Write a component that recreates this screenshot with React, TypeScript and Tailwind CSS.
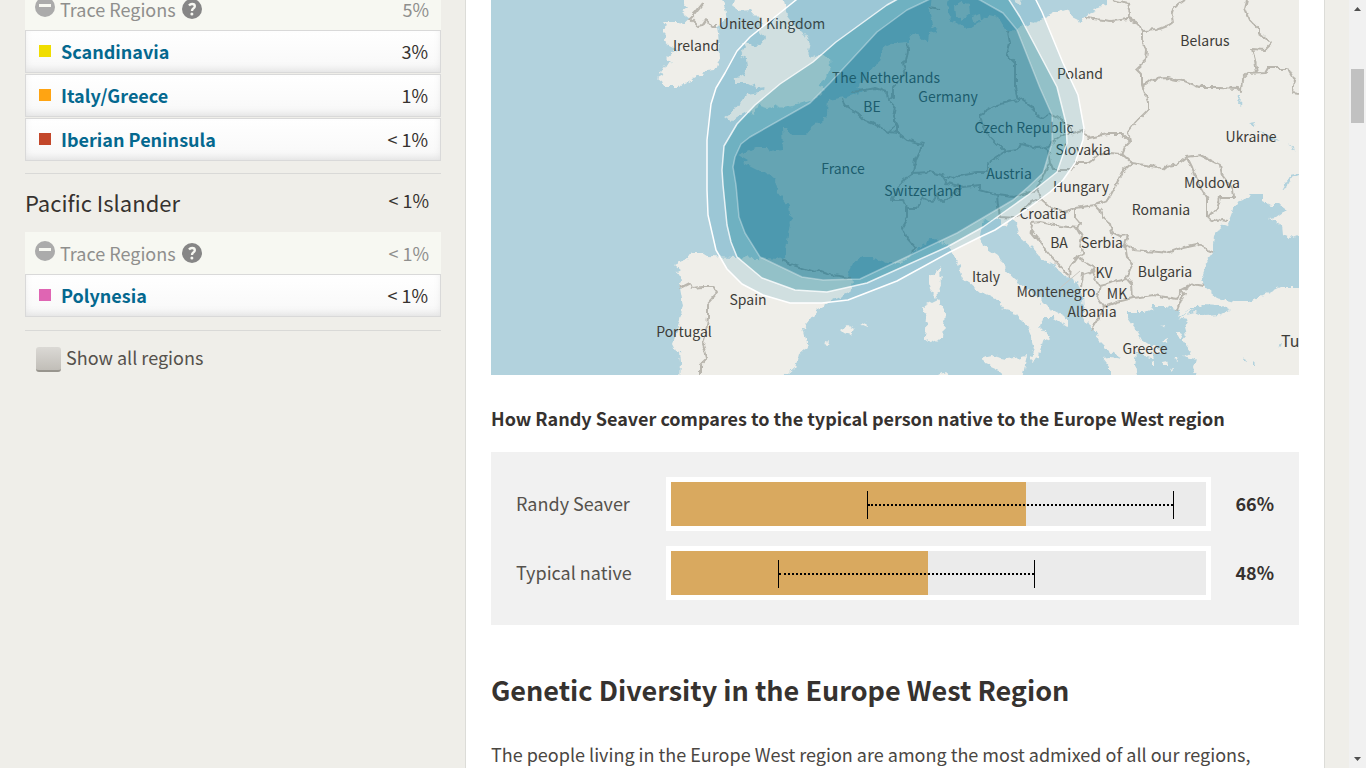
import React from "react";

interface Region {
  name: string;
  share: string;
  swatch: string;
}

interface Comparison {
  label: string;
  percent: string;
  fill: number;
  low: number;
  high: number;
}

interface MapLabel {
  name: string;
  x: number;
  y: number;
}

const europeTrace: Region[] = [
  { name: "Scandinavia", share: "3%", swatch: "bg-[#f0dd00]" },
  { name: "Italy/Greece", share: "1%", swatch: "bg-[#ffa412]" },
  { name: "Iberian Peninsula", share: "< 1%", swatch: "bg-[#c3472a]" },
];

const pacificTrace: Region[] = [
  { name: "Polynesia", share: "< 1%", swatch: "bg-[#df65b3]" },
];

const comparisons: Comparison[] = [
  { label: "Randy Seaver", percent: "66%", fill: 66.4, low: 36.6, high: 94 },
  { label: "Typical native", percent: "48%", fill: 48, low: 20, high: 68 },
];

const mapLabels: MapLabel[] = [
  { name: "United Kingdom", x: 772, y: 29 },
  { name: "Ireland", x: 696, y: 51 },
  { name: "Belarus", x: 1205, y: 46 },
  { name: "Poland", x: 1080, y: 79 },
  { name: "The Netherlands", x: 886, y: 83 },
  { name: "Germany", x: 948, y: 102 },
  { name: "BE", x: 872, y: 112 },
  { name: "Czech Republic", x: 1024, y: 133 },
  { name: "Ukraine", x: 1251, y: 142 },
  { name: "Slovakia", x: 1083, y: 155 },
  { name: "France", x: 843, y: 174 },
  { name: "Austria", x: 1009, y: 179 },
  { name: "Switzerland", x: 923, y: 196 },
  { name: "Hungary", x: 1081, y: 192 },
  { name: "Moldova", x: 1212, y: 188 },
  { name: "Croatia", x: 1043, y: 219 },
  { name: "Romania", x: 1161, y: 215 },
  { name: "BA", x: 1059, y: 248 },
  { name: "Serbia", x: 1102, y: 248 },
  { name: "KV", x: 1104, y: 278 },
  { name: "Bulgaria", x: 1165, y: 277 },
  { name: "Montenegro", x: 1056, y: 297 },
  { name: "MK", x: 1117, y: 299 },
  { name: "Albania", x: 1092, y: 317 },
  { name: "Italy", x: 986, y: 282 },
  { name: "Spain", x: 748, y: 305 },
  { name: "Portugal", x: 684, y: 337 },
  { name: "Greece", x: 1145, y: 354 },
];

const land = [
  // Ireland
  "685,-5 683,3 687,8 682,12 690,18 684,23 678,22 663,22 666,26 662,29 667,34 665,42 672,47 677,49 667,58 672,62 665,67 657,72 665,74 658,78 663,82 665,87 678,87 698,77 706,72 715,71 720,57 718,33 717,27 727,18 725,8 720,-5",
  // Great Britain
  "735,-5 732,6 738,10 750,9 755,15 763,23 757,32 765,37 762,43 758,46 743,43 745,47 740,55 747,58 748,68 745,75 732,79 735,83 747,83 757,88 767,87 760,93 747,95 742,100 733,112 725,118 732,121 737,117 747,112 753,115 757,105 767,108 775,105 783,108 797,105 813,100 822,95 823,87 817,85 825,80 831,67 830,60 822,54 812,57 807,53 809,43 805,35 800,30 793,23 787,15 783,-5",
  // Mainland
  "680,380 681,362 680,352 675,351 672,345 677,332 680,318 683,305 680,288 682,280 677,272 681,271 674,265 682,261 688,259 692,253 702,253 707,256 737,257 757,258 777,260 785,257 788,235 790,222 793,218 789,215 788,205 778,192 777,187 775,180 767,173 757,170 743,163 747,160 738,155 750,150 757,147 767,147 770,152 783,150 782,128 787,128 792,135 805,135 811,128 827,115 828,100 847,97 857,93 867,90 856,87 866,80 873,67 878,64 883,50 887,47 897,43 908,42 910,35 917,33 927,42 928,33 937,32 933,25 930,13 932,-5 950,-5 947,7 948,15 953,22 960,24 967,30 980,22 990,15 998,17 1003,25 1008,32 1027,25 1040,20 1055,12 1068,8 1072,17 1082,22 1085,16 1095,12 1092,8 1107,5 1107,-5 1305,-5 1305,380 1197,380 1193,367 1195,360 1183,357 1192,352 1183,340 1187,335 1185,327 1188,320 1178,318 1187,311 1202,307 1193,307 1177,317 1180,310 1167,306 1153,306 1152,309 1145,312 1128,312 1128,318 1135,328 1142,340 1150,345 1153,358 1145,355 1137,353 1135,365 1138,380 1110,380 1110,367 1103,358 1110,357 1122,359 1108,350 1098,340 1097,332 1090,327 1083,315 1082,295 1078,283 1068,277 1053,265 1040,257 1032,248 1020,237 1017,225 1013,218 1005,228 1000,222 998,218 983,222 980,235 983,245 998,255 1005,268 1013,278 1029,290 1040,300 1047,307 1068,318 1068,327 1053,318 1043,318 1040,327 1050,338 1040,345 1038,358 1030,361 1035,348 1032,338 1027,327 1017,313 1005,310 997,300 980,292 963,278 953,252 950,247 933,238 923,245 913,253 902,263 887,263 873,257 863,257 852,263 848,275 853,282 850,292 833,300 817,310 803,328 808,347 798,355 795,367 780,380",
  // Danish islands and Sweden
  "955,6 962,2 969,4 970,14 962,20 956,15",
  "972,16 980,14 981,20 974,21",
  "1015,-5 1021,-5 1020,4 1016,3",
  // Corsica, Sardinia
  "940,266 941,285 936,298 930,290 928,278 936,272",
  "938,300 945,312 943,338 932,343 925,338 927,318 922,308",
  // Balearics
  "840,330 848,325 855,329 850,336 844,334",
  "860,324 866,322 867,327 862,325",
  "824,344 829,340 828,345",
  // Sicily and the African coast
  "983,358 992,356 1007,359 1027,356 1025,365 1022,380 1010,380 1000,371 984,364",
  "935,377 945,372 952,378",
  // Aegean islands
  "1148,350 1155,345 1163,353 1158,354",
  "1176,332 1183,334 1181,339 1176,337",
  "1163,340 1168,338 1167,343",
  "1162,362 1167,361 1169,366 1163,366",
  "1174,358 1178,357 1179,361",
  "1160,326 1165,325 1164,329",
  "1170,368 1174,367 1173,371",
  "1150,362 1154,361 1154,366",
];

const water = [
  // Black Sea
  "1305,232 1290,238 1283,235 1282,225 1268,218 1277,217 1287,210 1280,205 1270,205 1262,201 1262,194 1250,194 1243,200 1238,202 1233,210 1228,223 1220,228 1215,237 1213,252 1207,260 1202,275 1205,288 1217,298 1235,302 1250,302 1263,295 1280,287 1305,287",
  // Sea of Marmara
  "1186,314 1200,306 1202,304 1220,305 1230,310 1220,315 1205,316 1195,312",
  // Rivers and lakes
  "1282,190 1287,181 1290,175 1299,173 1299,175 1291,178 1287,186",
  "1288,144 1297,152 1292,149",
  "1239,95 1241,95 1240,107 1238,105",
  "1279,347 1283,340 1282,348",
  "1244,356 1247,362 1244,361",
  "1253,362 1257,366 1253,366",
  "1260,131 1269,135 1279,141 1270,139",
  "1249,122 1255,121 1254,125",
];

const borders = [
  "703,3 695,13 690,18 698,26 702,25 706,19 712,27 717,27",
  "1112,0 1128,4 1131,12 1128,18 1138,23 1142,31 1157,30 1170,25 1173,23 1172,17 1175,7 1185,0",
  "1085,18 1112,21 1128,19",
  "1142,31 1142,40 1147,50 1146,60 1136,69 1142,75 1142,85 1148,102 1148,110 1135,123 1128,132 1130,142",
  "1142,85 1148,83 1153,79 1167,78 1187,82 1200,87 1220,87 1237,88 1241,92 1242,80 1248,74 1265,73 1268,68 1288,68 1295,80 1293,93 1299,94",
  "1247,0 1245,8 1250,20 1258,28 1258,33 1272,43 1265,50 1252,49 1255,60 1257,73",
  "980,115 997,105 1017,100 1020,98 1033,107 1037,115 1043,118 1050,113 1057,117 1070,127 1073,133 1083,130 1088,138 1108,134 1122,134 1130,142 1125,147 1122,154 1110,153 1098,155 1087,163 1075,163 1070,170 1053,170 1050,163",
  "980,115 983,127 990,137 1005,152 1017,150 1020,144 1037,148 1047,147 1063,135 1073,133",
  "1047,147 1050,163",
  "1008,32 1010,43 1007,55 1015,63 1015,87 1018,100",
  "907,43 908,50 906,62 902,63 905,75 893,87 893,97 888,100",
  "843,98 845,105 858,113 865,120 873,123 888,132 897,125 893,117 895,107 888,100 887,92 875,88 853,92",
  "888,132 898,133 907,140 923,144 915,160 913,173",
  "898,133 898,126 893,117",
  "913,173 903,180 892,200 903,200 907,208 918,208 922,197 932,203 937,195 943,202 952,195 963,187 947,183 942,175",
  "913,173 930,172 942,175 953,178 958,175 977,172 988,172 988,163 1000,155 1005,152",
  "963,187 980,185 980,190 997,195 1013,197 1037,190 1045,172 1050,163",
  "997,195 998,205 1000,217 1017,218 1027,205 1040,198 1037,190",
  "907,208 907,218 902,227 907,238 915,247 912,253",
  "782,260 793,265 815,272 818,270 832,275 850,278",
  "680,288 690,283 692,288 703,287 713,287 717,293 708,303 708,318 706,332 703,345 707,358 700,365 700,375",
  "929,7 940,9",
  "1122,154 1132,163 1157,167 1162,170 1167,166 1178,164 1187,157 1200,155 1210,160 1220,165 1222,175 1232,188 1233,198 1220,198 1217,208 1208,218",
  "1187,157 1192,167 1198,183 1207,198 1207,217 1217,222 1222,219 1228,220",
  "1132,163 1122,172 1115,187 1108,200 1095,205 1075,208 1063,212 1050,207 1040,198",
  "1095,205 1100,210 1103,218 1110,223 1112,232 1120,236 1128,235 1125,245 1133,250 1158,252 1167,253 1183,247 1197,244 1203,248 1213,252",
  "1125,245 1127,257 1133,263 1126,278 1132,285 1133,298 1153,295 1177,299 1182,290 1193,284 1204,286",
  "1182,290 1184,293 1177,310",
  "1126,279 1100,285 1097,298 1103,307 1117,302 1133,298",
  "1092,272 1083,275 1081,287",
  "1092,272 1098,283 1100,285",
  "1103,307 1100,317 1092,330",
  "1069,277 1070,267 1077,257 1095,268 1092,272",
  "1068,275 1053,258 1030,230 1032,223 1040,222 1060,226 1077,228 1082,237 1080,247 1083,253 1077,257",
  "1075,208 1075,218 1081,225 1077,228",
];

const GeneticRegionMap: React.FC = () => {
  return (
    <svg
      className="block w-full h-[375px] bg-[#b2d2dd]"
      viewBox="491 0 808 375"
      preserveAspectRatio="xMidYMid slice"
      role="img"
      aria-label="Map of the Europe West region"
    >
      <defs>
        <filter id="coast" x="491" y="0" width="808" height="375" filterUnits="userSpaceOnUse" colorInterpolationFilters="sRGB">
          <feTurbulence type="fractalNoise" baseFrequency="0.16" numOctaves="2" seed="4" />
          <feDisplacementMap in="SourceGraphic" scale="7" xChannelSelector="R" yChannelSelector="G" />
        </filter>
        <filter id="frontier" x="491" y="0" width="808" height="375" filterUnits="userSpaceOnUse" colorInterpolationFilters="sRGB">
          <feTurbulence type="fractalNoise" baseFrequency="0.14" numOctaves="2" seed="9" />
          <feDisplacementMap in="SourceGraphic" scale="6" xChannelSelector="R" yChannelSelector="G" />
        </filter>
      </defs>
      <g filter="url(#coast)">
        {land.map((points) => (
          <polygon key={points} points={points} fill="#efeee9" />
        ))}
        {water.map((points) => (
          <polygon key={points} points={points} fill="#b2d2dd" />
        ))}
      </g>
      <g filter="url(#frontier)" fill="none" stroke="#b9b6ae" strokeWidth="2" strokeLinejoin="round">
        {borders.map((points) => (
          <polyline key={points} points={points} />
        ))}
      </g>
      <path d="M1060 288L1080 271" stroke="#c9c7c1" />
      <g className="text-[14px]" fill="#3d3c38" textAnchor="middle">
        {mapLabels.map((label) => (
          <text key={label.name} x={label.x} y={label.y}>
            {label.name}
          </text>
        ))}
        <text x="1281" y="347" textAnchor="start" className="text-[16px]">
          Tu
        </text>
      </g>
      <g strokeWidth="1.5" strokeLinejoin="round">
        <polygon
          points="796,0 750,37 737,51 725,73 716,88 711,104 707,140 707,190 708,215 716,250 727,269 742,284 763,295 790,303 822,303 848,300 897,281 950,252 980,237 995,230 1030,207 1050,192 1063,180 1075,163 1083,140 1084,128 1078,95 1063,63 1042,12 1032,-8 806,-8"
          fill="rgb(33 138 173 / 0.15)"
          stroke="#fff"
        />
        <polygon
          points="896,0 887,5 836,42 813,62 780,84 755,105 737,124 724,146 722,170 723,185 727,225 731,242 737,257 762,278 795,290 827,292 867,283 947,247 983,227 1028,195 1047,180 1057,172 1067,143 1066,123 1057,87 1020,17 1004,-8 912,-8"
          fill="rgb(5 126 147 / 0.3)"
          stroke="rgb(255 255 255 / 0.8)"
        />
        <polygon
          points="928,0 907,10 877,32 830,83 810,103 750,137 741,144 735,157 733,167 736,185 739,217 745,233 760,257 802,277 823,280 860,279 957,233 1013,200 1028,187 1043,173 1052,143 1052,115 1040,88 1017,30 1003,13 980,0 960,-8 945,-8"
          fill="rgb(6 103 138 / 0.32)"
          stroke="rgb(255 255 255 / 0.35)"
        />
      </g>
    </svg>
  );
};

const TraceHeader: React.FC<{ share: string }> = ({ share }) => {
  return (
    <div className="flex h-[42px] items-center bg-[#f7f8f2] pl-2.5 pr-3 text-[#8f8f8d]">
      <button type="button" aria-label="Collapse trace regions" className="-mt-1 mr-[5px]">
        <svg className="block size-5" viewBox="0 0 20 20">
          <circle cx="10" cy="10" r="10" fill="#ababab" />
          <rect x="4" y="7" width="12" height="3" fill="#f7f8f2" />
        </svg>
      </button>
      <span>Trace Regions</span>
      <button type="button" aria-label="About trace regions" className="ml-1.5">
        <svg className="block size-5" viewBox="0 0 20 20">
          <circle cx="10" cy="10" r="10" fill="#868686" />
          <path
            d="M7 6.6Q8.300 5 10.100 5Q12.800 5 12.800 7.200Q12.800 8.600 11.300 9.500Q10 10.300 10 12"
            fill="none"
            stroke="#f7f8f2"
            strokeWidth="2.400"
          />
          <circle cx="9.900" cy="15" r="1.500" fill="#f7f8f2" />
        </svg>
      </button>
      <span className="ml-auto">{share}</span>
    </div>
  );
};

const RegionList: React.FC<{ regions: Region[] }> = ({ regions }) => {
  return (
    <ul className="flex flex-col gap-px">
      {regions.map((region) => (
        <li
          key={region.name}
          className="flex h-[43px] items-center border border-[#d9d9d9] bg-linear-to-b from-white to-[#f8f8f8] pb-0.5 pl-[13px] pr-3 shadow-[inset_0_-4px_8px_-2px_rgba(0,0,0,0.1)]"
        >
          <span className={`mr-2.5 size-3 ${region.swatch}`} />
          <a href="#" className="font-bold text-[#04688f]">
            {region.name}
          </a>
          <span className="ml-auto">{region.share}</span>
        </li>
      ))}
    </ul>
  );
};

const Sidebar: React.FC = () => {
  return (
    <aside className="-mt-3 w-[465px] shrink-0 pl-[25px] pr-6">
      <TraceHeader share="5%" />
      <RegionList regions={europeTrace} />
      <div className="mt-3 flex h-[59px] items-center justify-between border-t border-[#d9d9d7] pb-0.5 pr-3">
        <h2 className="text-[22px]">Pacific Islander</h2>
        <span className="-mt-1">&lt; 1%</span>
      </div>
      <TraceHeader share="< 1%" />
      <RegionList regions={pacificTrace} />
      <div className="mt-[13px] border-t border-[#d9d9d7] pl-[11px] pt-4">
        <label className="flex items-center gap-[5px] text-[#55514c]">
          <input
            type="checkbox"
            className="size-[25px] appearance-none rounded-[3px] border-b-2 border-[#98958e] bg-linear-to-b from-[#dbd9d5] to-[#c1beb8]"
          />
          <span className="-mt-1.5">Show all regions</span>
        </label>
      </div>
    </aside>
  );
};

const ComparisonRow: React.FC<{ item: Comparison }> = ({ item }) => {
  return (
    <div className="flex items-center">
      <span className="w-[150px] shrink-0 pb-0.5 text-[#55514c]">{item.label}</span>
      <div className="relative h-[54px] flex-1 border-[5px] border-white bg-[#ebebeb]">
        <div className="h-full bg-[#d9a95f]" style={{ width: `${item.fill}%` }} />
        <div
          className="absolute top-[9px] flex h-7 items-center border-x border-black"
          style={{ left: `${item.low}%`, right: `${100 - item.high}%` }}
        >
          <div className="w-full border-t-2 border-dotted border-black" />
        </div>
      </div>
      <span className="ml-6 w-[39px] pb-0.5 text-right font-bold">{item.percent}</span>
    </div>
  );
};

const Scrollbar: React.FC = () => {
  return (
    <div className="flex w-[17px] shrink-0 flex-col items-center bg-[#f1f1f1]">
      <svg className="h-[17px] w-[17px]" viewBox="0 0 17 17">
        <path d="M5 11L8.500 7L12 11Z" fill="#505050" />
      </svg>
      <div className="mt-[52px] h-[54px] w-[13px] bg-[#c1c1c1]" />
      <svg className="mt-auto h-[17px] w-[17px]" viewBox="0 0 17 17">
        <path d="M5 6L8.500 10L12 6Z" fill="#505050" />
      </svg>
    </div>
  );
};

const App: React.FC = () => {
  return (
    <div className="flex h-screen overflow-hidden bg-[#efeee9] font-['Noto_Sans_CJK_SC','Noto_Sans',sans-serif] text-[18px] leading-6 text-[#36322f]">
      <Sidebar />
      <main className="min-w-0 flex-1 border-x border-[#dcdcd8] bg-white px-[25px]">
        <GeneticRegionMap />
        <h3 className="mb-[21px] mt-[31px] leading-[25px] font-bold">
          How Randy Seaver compares to the typical person native to the Europe West region
        </h3>
        <div className="flex flex-col gap-[15px] bg-[#f1f1f1] p-[25px]">
          {comparisons.map((item) => (
            <ComparisonRow key={item.label} item={item} />
          ))}
        </div>
        <h2 className="mt-[47px] text-[27px] leading-9 font-bold">
          Genetic Diversity in the Europe West Region
        </h2>
        <p className="mt-[31px] leading-[30px] text-[#4a4642]">
          The people living in the Europe West region are among the most admixed of all our regions,
        </p>
      </main>
      <div className="w-6 shrink-0" />
      <Scrollbar />
    </div>
  );
};

export default App;
